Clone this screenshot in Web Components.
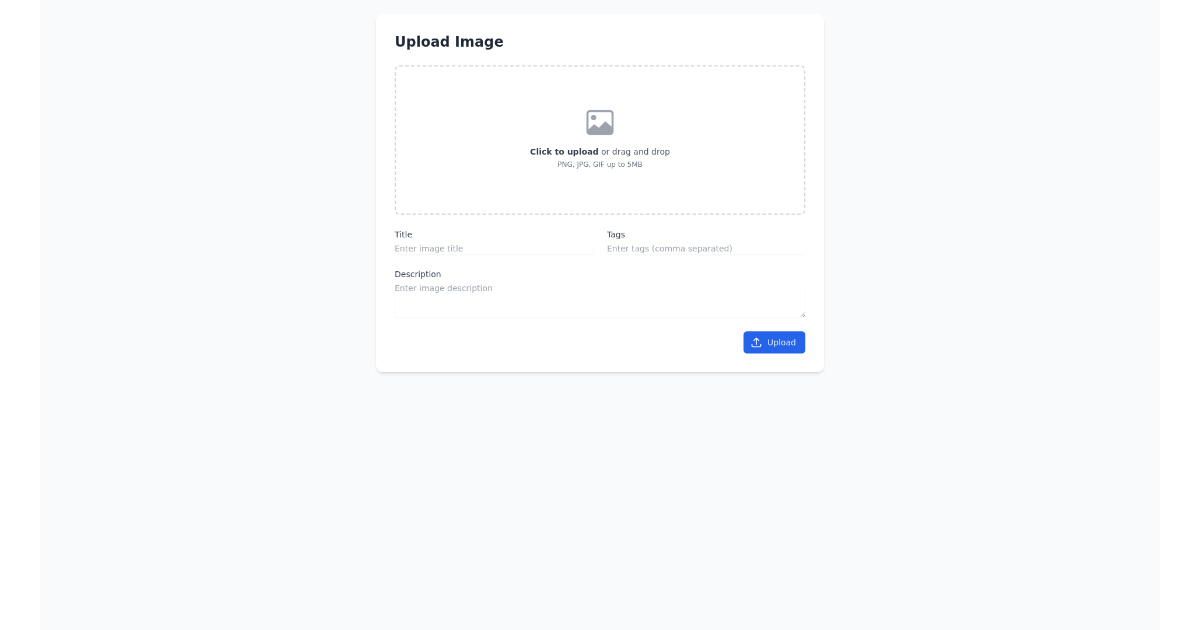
<!DOCTYPE html>
<html lang="en"><head><meta charset="utf-8"><title>Upload Image</title>
<style>
html,body{margin:0;height:630px;background:#fff;overflow:hidden}
body{font-family:"DejaVu Sans",sans-serif}
</style></head>
<body>
<upload-page><upload-card></upload-card></upload-page>
<script>
class UploadPage extends HTMLElement{constructor(){super();this.attachShadow({mode:'open'}).innerHTML=`
<style>
:host{display:block;width:1120px;height:630px;margin:0 auto;background:#f9fafb;overflow:hidden}
.stage{box-sizing:border-box;width:1920px;height:1080px;padding-top:24px;transform:scale(.58333);transform-origin:0 0;will-change:transform}
</style><div class="stage"><slot></slot></div>`;}}
class UploadCard extends HTMLElement{constructor(){super();this.attachShadow({mode:'open'}).innerHTML=`
<style>
:host{display:block;width:768px;box-sizing:border-box;margin:0 auto;padding:32px;background:#fff;border-radius:12px;box-shadow:0 4px 6px -1px rgba(0,0,0,.1),0 2px 4px -2px rgba(0,0,0,.1);color:#1f2937}
h1{margin:0 0 24px;font-size:24px;line-height:32px;font-weight:700;color:#1f2937}
</style>
<h1>Upload Image</h1>
<drop-zone></drop-zone>
<form-grid>
<text-field label="Title" placeholder="Enter image title"></text-field>
<text-field label="Tags" placeholder="Enter tags (comma separated)"></text-field>
</form-grid>
<text-field label="Description" placeholder="Enter image description" multiline></text-field>
<form-actions><upload-button>Upload</upload-button></form-actions>`}}
class DropZone extends HTMLElement{constructor(){super();this.attachShadow({mode:'open'}).innerHTML=`
<style>
:host{display:flex;flex-direction:column;align-items:center;justify-content:center;box-sizing:border-box;height:256px;padding-bottom:4px;border:2px dashed #d1d5db;border-radius:8px;text-align:center}
svg{display:block;width:48px;height:48px;color:#9ca3af;margin-bottom:15px}
p{margin:0;font-size:14px;line-height:20px;color:#4b5563}
b{font-weight:600;color:#374151}
small{display:block;font-size:12px;line-height:16px;color:#6b7280;margin-top:4px}
</style>
<svg viewBox="0 0 48 48" fill="none" aria-hidden="true">
<rect x="2.5" y="3.5" width="43" height="39" rx="4" stroke="currentColor" stroke-width="3.6"/>
<circle cx="13" cy="14.5" r="4.6" fill="currentColor"/>
<path d="M3 36l11-10 8 6 11-11 12 10v11H3z" fill="currentColor"/>
</svg>
<p><b>Click to upload</b> or drag and drop</p>
<small>PNG, JPG, GIF up to 5MB</small>`}}
class FormGrid extends HTMLElement{constructor(){super();this.attachShadow({mode:'open'}).innerHTML=`
<style>:host{display:grid;grid-template-columns:1fr 1fr;column-gap:24px;margin-top:24px}</style><slot></slot>`}}
class TextField extends HTMLElement{constructor(){super();const m=this.hasAttribute('multiline'),ph=this.getAttribute('placeholder'),l=this.getAttribute('label');this.attachShadow({mode:'open'}).innerHTML=`
<style>
:host{display:block}
:host([multiline]){margin-top:24px}
label{display:block;font-size:14px;line-height:20px;color:#374151}
input,textarea{display:block;width:100%;box-sizing:border-box;margin:0;padding:4px 0 0;font:14px/20px "DejaVu Sans",sans-serif;color:#374151;background:transparent;border:0;border-radius:6px;outline:none;box-shadow:0 1px 2px rgba(0,0,0,.05)}
input{height:24px}
textarea{height:64px;resize:vertical}
::placeholder{color:#9ca3af;opacity:1}
</style>
<label>${l}</label>${m?`<textarea placeholder="${ph}"></textarea>`:`<input type="text" placeholder="${ph}">`}`}}
class FormActions extends HTMLElement{constructor(){super();this.attachShadow({mode:'open'}).innerHTML=`
<style>:host{display:flex;justify-content:flex-end;margin-top:24px}</style><slot></slot>`}}
class UploadButton extends HTMLElement{constructor(){super();this.attachShadow({mode:'open'}).innerHTML=`
<style>
:host{display:inline-flex;align-items:center;gap:9px;box-sizing:border-box;height:38px;padding:0 16px 0 12px;background:#2563eb;color:#e3eafc;border-radius:6px;font-size:14px;line-height:20px}
svg{width:20px;height:20px;flex:none;display:block;color:#fff}
</style>
<svg viewBox="0 0 24 24" fill="none" stroke="currentColor" stroke-width="2" stroke-linecap="round" stroke-linejoin="round" aria-hidden="true"><path d="M3 16v3a2 2 0 0 0 2 2h14a2 2 0 0 0 2-2v-3"/><path d="M12 16V3M7 8l5-5 5 5"/></svg>
<slot></slot>`}}
customElements.define('upload-page',UploadPage);
customElements.define('upload-card',UploadCard);
customElements.define('drop-zone',DropZone);
customElements.define('form-grid',FormGrid);
customElements.define('text-field',TextField);
customElements.define('form-actions',FormActions);
customElements.define('upload-button',UploadButton);
</script>
</body></html>
